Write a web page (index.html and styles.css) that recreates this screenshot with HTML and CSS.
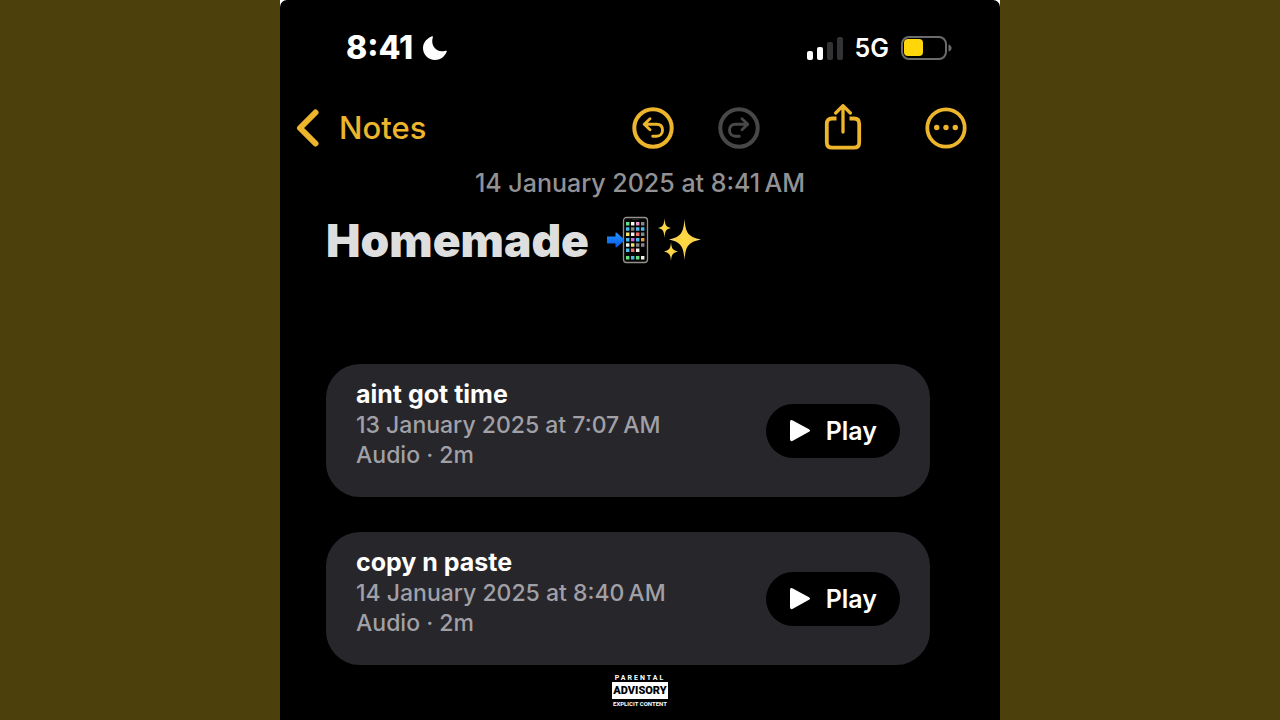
FILE: index.html
```
<!DOCTYPE html>
<html lang="en">
<head>
<meta charset="utf-8">
<meta name="viewport" content="width=device-width, initial-scale=1">
<title>Homemade</title>
<link rel="stylesheet" href="styles.css">
</head>
<body>
<div class="frame">
<div class="phone">
  <div class="status">
    <div class="clock">
      <span>8:41</span>
      <svg class="moon" width="26" height="26" viewBox="0 0 26 26" aria-hidden="true"><path d="M9.6 1.4C10.5 1 11.2 1.6 10.8 2.6C8.4 9.8 13.6 18 22.6 16C24.2 15.6 25.2 15.600 24.600 17C22.500 22 18 25 13 25C6.300 25 1 19.800 1 13C1 7.800 4.500 3.300 9.600 1.400Z" fill="#fff"/></svg>
    </div>
    <div class="signals">
      <svg width="38" height="24" viewBox="0 0 38 24" aria-hidden="true"><rect x="1" y="15" width="6" height="9" rx="2" fill="#fff"/><rect x="11" y="11" width="6" height="13" rx="2" fill="#fff"/><rect x="21" y="6" width="6" height="18" rx="2" fill="#333335"/><rect x="31" y="1" width="6" height="23" rx="2" fill="#333335"/></svg>
      <span>5G</span>
      <svg width="52" height="26" viewBox="0 0 52 26" aria-hidden="true"><rect x="2" y="2" width="44" height="22" rx="7" fill="none" stroke="#6b6b6e" stroke-width="2"/><rect x="4" y="4" width="19" height="17" rx="4" fill="#fed60a"/><path d="M48.500 9.500Q51.500 10.500 51.500 13T48.500 16.500Z" fill="#6b6b6e"/></svg>
    </div>
  </div>
  <nav class="toolbar">
    <a class="back" href="#">
      <svg width="26" height="40" viewBox="0 0 26 40" aria-hidden="true"><path d="M20.500 4.500L5 20L20.500 35.500" fill="none" stroke="currentColor" stroke-width="6" stroke-linecap="round" stroke-linejoin="round"/></svg>
      <span>Notes</span>
    </a>
    <div class="actions">
      <button type="button" aria-label="Undo"><svg width="42" height="42" viewBox="0 0 42 42" fill="none" stroke="currentColor" stroke-linecap="round" stroke-linejoin="round"><circle cx="21" cy="21" r="18.700" stroke-width="4"/><path d="M18 11.800L12.200 17.300L18 22.800M12.800 17.300H24.500C28.700 17.300 30.500 20 30.500 23.200C30.500 26.800 28.200 29.300 24.500 29.300H20.700" stroke-width="2.900"/></svg></button>
      <button type="button" aria-label="Redo" disabled><svg width="42" height="42" viewBox="0 0 42 42" fill="none" stroke="currentColor" stroke-linecap="round" stroke-linejoin="round"><circle cx="21" cy="21" r="18.700" stroke-width="4"/><path d="M24 11.800L29.800 17.300L24 22.800M29.200 17.300H17.500C13.300 17.300 11.500 20 11.500 23.200C11.500 26.800 13.800 29.300 17.500 29.300H21.300" stroke-width="2.900"/></svg></button>
      <button type="button" class="share" aria-label="Share"><svg width="38" height="48" viewBox="0 0 38 48" fill="none" stroke="currentColor" stroke-width="3.800" stroke-linecap="round" stroke-linejoin="round"><path d="M12.500 14.500H8Q2.800 14.500 2.800 19.700V38.500Q2.800 43.700 8 43.700H30Q35.200 43.700 35.200 38.500V19.700Q35.200 14.500 30 14.500H25.500" stroke-linecap="butt"/><path d="M19 28V2M11.700 9L19 1.700L26.300 9" stroke-width="3.300"/></svg></button>
      <button type="button" class="more" aria-label="More"><svg width="42" height="42" viewBox="0 0 42 42"><circle cx="21" cy="21" r="18.700" fill="none" stroke="currentColor" stroke-width="3.800"/><g fill="currentColor"><circle cx="11.700" cy="20.500" r="2.700"/><circle cx="21" cy="20.500" r="2.700"/><circle cx="30.300" cy="20.500" r="2.700"/></g></svg></button>
    </div>
  </nav>
  <main>
    <p class="stamp">14 January 2025 at 8:41&#8201;AM</p>
    <h1><span>Homemade</span>
      <svg class="handset" width="43" height="48" viewBox="0 0 43 48" role="img" aria-label="Phone with arrow">
        <defs><linearGradient id="blue" x2="0" y2="1"><stop stop-color="#2597ff"/><stop offset="1" stop-color="#0757e5"/></linearGradient></defs>
        <rect x="17.500" y="1.500" width="24" height="45" rx="3" fill="#020303" stroke="#92918a" stroke-width="1.300"/>
        <path d="M1 20.500H9.500V17.500Q9.500 15.700 11 17L17.500 22.800Q18.700 24 17.500 25.200L11 31Q9.500 32 9.500 30.500V27.500H1Z" fill="url(#blue)"/>
        <path d="M26 3.500H33" stroke="#222"/>
        <g fill="#62e17c"><path d="M20 6h3.400v3.400H20zM20 40h3.400v3.400H20zM30 40h3.400v3.400H30z"/></g>
        <g fill="#f2f4f0"><path d="M25 6h3.400v3.400H25zM25 16.500h3.400v3.400H25zM20 27.300h3.400v3.400H20zM30 32.600h3.400V36H30zM35 40h3.400v3.400H35z"/></g>
        <g fill="#4bbbea"><path d="M20 11.300h3.400v3.400H20zM30 11.300h3.400v3.400H30zM35 11.300h3.400v3.400H35zM20 22h3.400v3.400H20zM30 22h3.400v3.400H30zM20 32.600h3.400V36H20zM25 40h3.400v3.400H25z"/></g>
        <g fill="#888"><path d="M35 6h3.400v3.400H35zM25 11.300h3.400v3.400H25zM35 16.500h3.400v3.400H35zM30 27.300h3.400v3.400H30zM35 27.300h3.400v3.400H35z"/></g>
        <g fill="#f4e568"><path d="M20 16.500h3.400v3.400H20zM25 27.300h3.400v3.400H25z"/></g>
        <path d="M30 6h3.400v3.400H30z" fill="#f09acb"/><path d="M30 16.500h3.400v3.400H30zM25 32.600h3.400V36H25z" fill="#f36f6c"/><path d="M25 22h3.400v3.400H25z" fill="#cc66ed"/><path d="M35 22h3.400v3.400H35z" fill="#f19a38"/>
      </svg>
      <svg class="sparkles" width="44" height="44" viewBox="0 0 44 44" role="img" aria-label="Sparkles">
        <defs><radialGradient id="gold"><stop stop-color="#ffda3e"/><stop offset=".55" stop-color="#fbd04b"/><stop offset="1" stop-color="#ffe98e"/></radialGradient></defs>
        <g fill="url(#gold)"><path d="M26.500 1C27.500 14.500 30 19 43 21.500C30 24 27.500 28.500 26.500 42C25.500 28.500 23 24 11 21.500C23 19 25.500 14.500 26.500 1Z"/><path d="M6.500 0C7 7 8 8.800 13 10C8 11.200 7 13 6.500 20C6 13 5 11.200 0 10C5 8.800 6 7 6.500 0Z"/><path d="M13 24C13.500 30.500 14.500 32 20 33.500C14.500 35 13.500 36.500 13 43C12.500 36.500 11.500 35 6 33.500C11.500 32 12.500 30.500 13 24Z"/></g>
      </svg>
    </h1>
    <div class="tracks">
      <article class="track">
        <div class="info"><h2>aint got time</h2><p>13 January 2025 at 7:07&#8201;AM</p><p>Audio · 2m</p></div>
        <button type="button" class="play"><svg width="22" height="24" viewBox="0 0 22 24" aria-hidden="true"><path d="M1 3Q1 0 3.800 1.400L20 10.200Q22 11.500 20 12.800L3.800 21.800Q1 23 1 20Z" fill="currentColor"/></svg><span>Play</span></button>
      </article>
      <article class="track">
        <div class="info"><h2>copy n paste</h2><p>14 January 2025 at 8:40&#8201;AM</p><p>Audio · 2m</p></div>
        <button type="button" class="play"><svg width="22" height="24" viewBox="0 0 22 24" aria-hidden="true"><path d="M1 3Q1 0 3.800 1.400L20 10.200Q22 11.500 20 12.800L3.800 21.800Q1 23 1 20Z" fill="currentColor"/></svg><span>Play</span></button>
      </article>
    </div>
  </main>
  <footer class="advisory"><span class="parental">PARENTAL</span><strong>ADVISORY</strong><span class="explicit">EXPLICIT CONTENT</span></footer>
</div>
</div>
</body>
</html>
```
FILE: styles.css
```
* { box-sizing: border-box; }
body { margin: 0; background: #4c400d; font-family: Inter, "Liberation Sans", sans-serif; color: #fff; }
h1, h2, p { margin: 0; }
svg { display: block; flex-shrink: 0; }
button { border: 0; padding: 0; background: none; color: inherit; font: inherit; cursor: pointer; }
.frame { max-width: 720px; margin: 0 auto; background: #fff; }
.phone { min-height: 100vh; background: #000; border-radius: 7px 7px 0 0; }
.status { display: flex; justify-content: space-between; align-items: center; padding: 28px 48px 0 66px; }
.clock { display: flex; align-items: center; gap: 9px; font-size: 32px; line-height: 40px; font-weight: 800; }
.signals { display: flex; align-items: center; gap: 11px; font-size: 25px; line-height: 40px; font-weight: 600; }
.toolbar { display: flex; justify-content: space-between; align-items: center; padding: 36px 33px 16px 15px; color: #ecb52c; }
.back { display: flex; align-items: center; gap: 18px; color: inherit; text-decoration: none; font-size: 31px; line-height: 40px; font-weight: 500; }
.actions { display: flex; align-items: center; gap: 44px; }
.actions button:disabled { color: #48484a; cursor: default; }
.share { margin-left: 20px; }
.more { margin-left: 19px; }
.stamp { text-align: center; color: #929295; font-size: 25px; line-height: 30px; font-weight: 500; }
h1 { display: flex; align-items: center; padding: 0 46px; margin-top: 12px; font-size: 46px; line-height: 60px; font-weight: 900; color: #dedede; }
.handset { margin-left: 17px; }
.sparkles { margin-left: 9px; }
.tracks { display: grid; gap: 35px; padding: 94px 70px 0 46px; }
.track { display: flex; align-items: center; justify-content: space-between; min-height: 133px; padding: 12px 30px 26px; border-radius: 34px; background: #27262b; }
.info { line-height: 30px; font-size: 23px; font-weight: 500; color: #a1a0a6; }
.info h2 { font-size: 25px; line-height: 32px; font-weight: 700; color: #fff; }
.play { display: flex; align-items: center; gap: 15px; height: 54px; padding: 0 23px; margin-top: 14px; border-radius: 27px; background: #000; color: #fff; font-size: 25px; font-weight: 600; }
.advisory { display: flex; flex-direction: column; align-items: center; padding: 10px 0 8px; font-family: "Liberation Sans Narrow", Roboto, sans-serif; font-weight: 700; }
.advisory strong { padding: 0 1px; background: #fff; color: #000; font-size: 11px; line-height: 17px; }
.parental { font-size: 7px; line-height: 7px; letter-spacing: 2px; }
.explicit { font-size: 6px; line-height: 9px; }
```
